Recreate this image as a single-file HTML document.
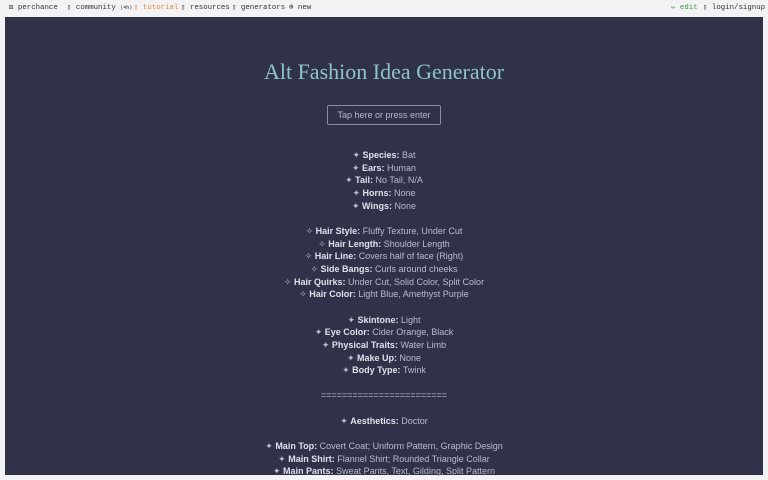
<!DOCTYPE html>
<html><head><meta charset="utf-8"><style>
body{margin:0;width:768px;height:480px;background:#f3f3f5;font-family:"Liberation Sans",sans-serif;overflow:hidden;position:relative}
.nav{position:absolute;top:0;left:0;right:0;height:17px;font-family:"Liberation Mono",monospace;font-size:7.4px;color:#333;line-height:17px}
.nav span{position:absolute;top:0;white-space:nowrap}
.frame{position:absolute;left:5px;top:17px;width:758px;height:458px;background:#2f3249}
h1{position:absolute;top:42px;left:0;right:0;margin:0;text-align:center;font-family:"Liberation Serif",serif;font-weight:normal;font-size:22px;color:#8fc3cc}
.btn{position:absolute;left:322px;top:88px;width:112px;height:18px;border:1px solid #8a8ea3;border-radius:2px;color:#b5b8c8;font-size:9px;line-height:18px;text-align:center}
.out{position:absolute;top:132px;left:0;right:0;text-align:center;font-size:9px;line-height:12.65px;color:#b9bccd}
.out b{color:#dfe1ea}
</style></head><body>
<div class="nav">
<span style="left:9px">⚄ perchance</span>
<span style="left:67px">▯ community <small style="font-size:5px">(4h)</small></span>
<span style="left:134px;color:#e0883a">▯ tutorial</span>
<span style="left:181px">▯ resources</span>
<span style="left:232px">▯ generators</span>
<span style="left:289px">⊕ new</span>
<span style="left:671px;color:#3a9a3a">✏ edit</span>
<span style="left:703px">▯ login/signup</span>
</div>
<div class="frame">
<h1>Alt Fashion Idea Generator</h1>
<div class="btn">Tap here or press enter</div>
<div class="out">
✦ <b>Species:</b> Bat<br>✦ <b>Ears:</b> Human<br>✦ <b>Tail:</b> No Tail, N/A<br>✦ <b>Horns:</b> None<br>✦ <b>Wings:</b> None<br><br>
✧ <b>Hair Style:</b> Fluffy Texture, Under Cut<br>✧ <b>Hair Length:</b> Shoulder Length<br>✧ <b>Hair Line:</b> Covers half of face (Right)<br>✧ <b>Side Bangs:</b> Curls around cheeks<br>✧ <b>Hair Quirks:</b> Under Cut, Solid Color, Split Color<br>✧ <b>Hair Color:</b> Light Blue, Amethyst Purple<br><br>
✦ <b>Skintone:</b> Light<br>✦ <b>Eye Color:</b> Cider Orange, Black<br>✦ <b>Physical Traits:</b> Water Limb<br>✦ <b>Make Up:</b> None<br>✦ <b>Body Type:</b> Twink<br><br>
========================<br><br>
✦ <b>Aesthetics:</b> Doctor<br><br>
✦ <b>Main Top:</b> Covert Coat; Uniform Pattern, Graphic Design<br>✦ <b>Main Shirt:</b> Flannel Shirt; Rounded Triangle Collar<br>✦ <b>Main Pants:</b> Sweat Pants, Text, Gilding, Split Pattern
</div>
</div>
</body></html>
